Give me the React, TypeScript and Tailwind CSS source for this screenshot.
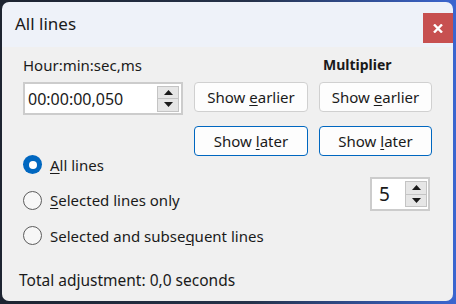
import React from 'react';

const font = { fontFamily: '"Noto Sans", "Open Sans", sans-serif' };

const SpinArrows: React.FC = () => (
  <div className="flex flex-col w-[22px] h-[26px] border border-[#c4c4c4] bg-[#e6e6e6]">
    <div className="flex-1 flex items-center justify-center border-b border-[#c4c4c4]">
      <svg width="9" height="5" viewBox="0 0 9 5"><path d="M0 5 L4.5 0 L9 5 Z" fill="#1a1a1a" /></svg>
    </div>
    <div className="flex-1 flex items-center justify-center">
      <svg width="9" height="5" viewBox="0 0 9 5"><path d="M0 0 L4.5 5 L9 0 Z" fill="#1a1a1a" /></svg>
    </div>
  </div>
);

const Btn: React.FC<{ pre: string; key1: string; post: string; focus?: boolean }> = ({ pre, key1, post, focus }) => (
  <button
    className={
      'h-[30px] w-full rounded-[4px] bg-[#fdfdfd] text-[15px] text-[#1a1a1a] ' +
      (focus ? 'border-[1.5px] border-[#0067c0]' : 'border border-[#d0d0d0]')
    }
  >
    {pre}
    <span className="underline underline-offset-2">{key1}</span>
    {post}
  </button>
);

const Radio: React.FC<{ checked?: boolean; children: React.ReactNode }> = ({ checked, children }) => (
  <div className="h-[35.5px] flex items-center gap-[8px]">
    {checked ? (
      <div className="w-[19px] h-[19px] rounded-full bg-[#0067c0] flex items-center justify-center">
        <div className="w-[8px] h-[8px] rounded-full bg-white" />
      </div>
    ) : (
      <div className="w-[19px] h-[19px] rounded-full border border-[#5c5c5c] bg-[#f7f7f7]" />
    )}
    <span className="text-[15px] text-[#1a1a1a]">{children}</span>
  </div>
);

export default function App() {
  return (
    <div
      className="w-[456px] h-[304px] pl-[2px] pt-[2px] pr-[3px] pb-[3px] bg-[linear-gradient(90deg,#1d2431_0%,#25324a_55%,#3b66d0_100%)]"
      style={font}
    >
      <div className="w-full h-full rounded-[7px] overflow-hidden flex flex-col">
        {/* title bar */}
        <div className="h-[45px] bg-[#eef2f9] flex items-start justify-between">
          <span className="pl-[13px] pt-[11px] text-[17px] leading-[22px] text-[#1a1a1a]">All lines</span>
          <div className="mt-[11px] w-[30px] h-[30px] bg-[#c75050] flex items-center justify-center">
            <svg width="10" height="9" viewBox="0 0 10 9">
              <path d="M1 0.5 L9 8.5 M9 0.5 L1 8.5" stroke="white" strokeWidth="2.4" />
            </svg>
          </div>
        </div>

        {/* body */}
        <div className="flex-1 bg-[#f0f0f0] pl-[21px] pr-[21px] pt-[8px] text-[#1a1a1a]">
          <div className="grid grid-cols-[160px_114px_113px] gap-x-[11px] items-start">
            <div className="text-[15px] leading-[20px]">Hour:min:sec,ms</div>
            <div />
            <div className="text-[14px] leading-[20px] font-bold pl-[4px]">Multiplier</div>

            <div className="mt-[7px] h-[33px] border-2 border-[#cccccc] bg-white flex items-center justify-between pl-[3px] pr-[2px]">
              <span className="text-[16px]">00:00:00,050</span>
              <SpinArrows />
            </div>
            <div className="mt-[7px]"><Btn pre="Show " key1="e" post="arlier" /></div>
            <div className="mt-[7px]"><Btn pre="Show " key1="e" post="arlier" /></div>

            <div />
            <div className="mt-[11px]"><Btn pre="Show " key1="l" post="ater" focus /></div>
            <div className="mt-[11px]"><Btn pre="Show " key1="l" post="ater" focus /></div>
          </div>

          <div className="flex items-start justify-between -mt-[9px]">
            <div className="flex flex-col">
              <Radio checked>
                <span className="underline underline-offset-2">A</span>ll lines
              </Radio>
              <Radio>
                <span className="underline underline-offset-2">S</span>elected lines only
              </Radio>
              <Radio>
                Selected and subse<span className="underline underline-offset-2">q</span>uent lines
              </Radio>
            </div>
            <div className="mt-[30px] mr-[2px] w-[60px] h-[34px] border-2 border-[#cccccc] bg-white flex items-center justify-between pl-[7px] pr-[1px]">
              <span className="text-[19px]">5</span>
              <SpinArrows />
            </div>
          </div>

          <div className="mt-[16px] -ml-[4px] text-[15.5px] leading-[20px]">Total adjustment: 0,0 seconds</div>
        </div>
      </div>
    </div>
  );
}
